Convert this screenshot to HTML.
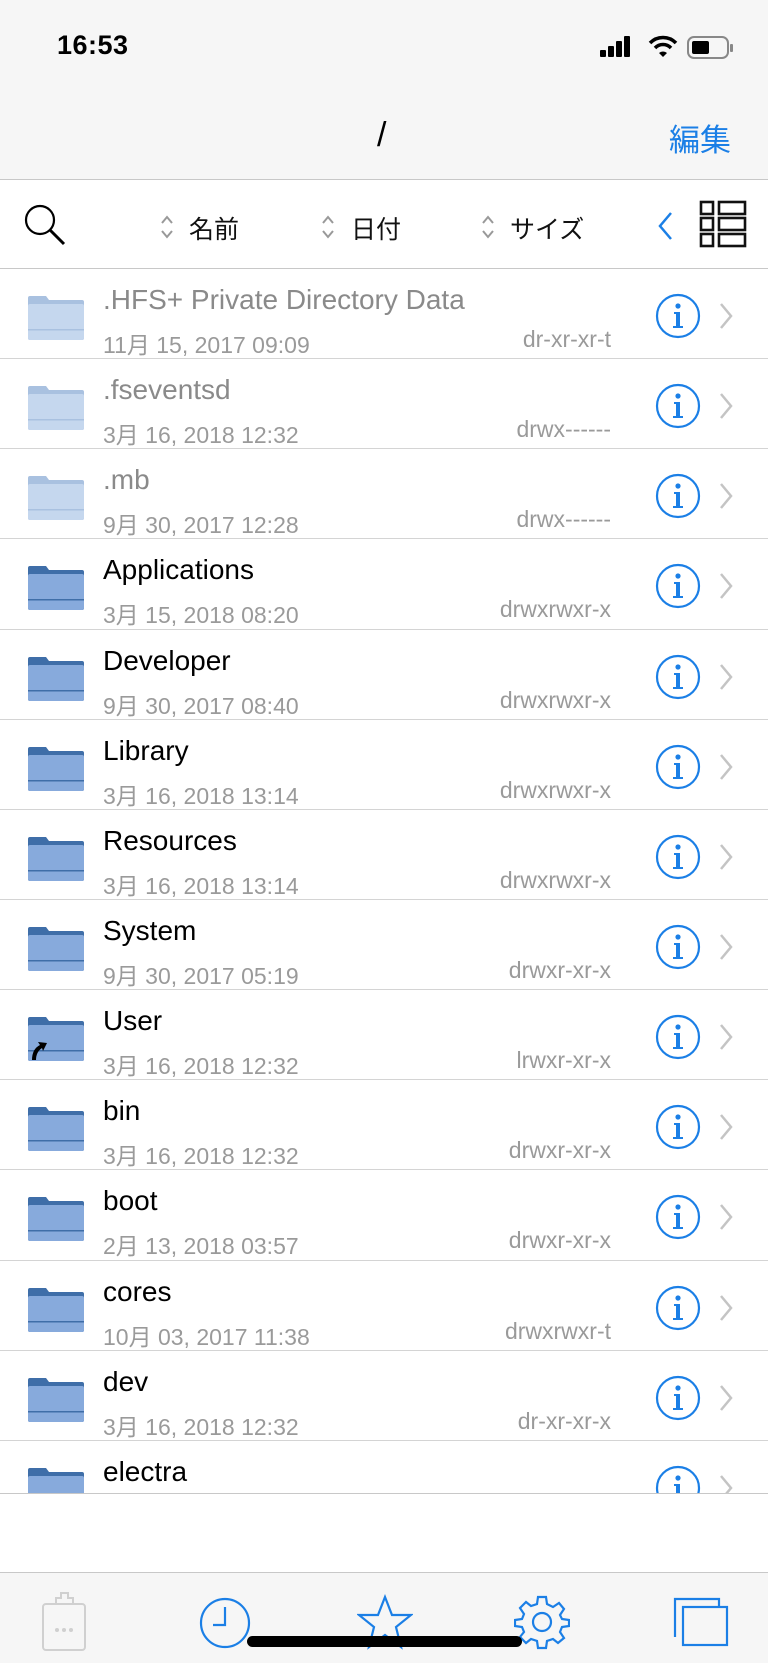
<!DOCTYPE html>
<html><head><meta charset="utf-8"><style>
*{margin:0;padding:0;box-sizing:border-box}
body{width:768px;height:1663px;position:relative;background:#fff;font-family:"Liberation Sans","Noto Sans CJK JP",sans-serif;overflow:hidden}
.abs{position:absolute}
.hdr{left:0;top:0;width:768px;height:180px;background:#f6f6f6;border-bottom:1px solid #c8c8c8}
.tb{left:0;top:180px;width:768px;height:89px;border-bottom:1px solid #c8c8c8;background:#fff}
.list{left:0;top:269px;width:768px;height:1225px;overflow:hidden;border-bottom:1px solid #c8c8c8}
.row{position:relative;height:90.15px;border-bottom:1px solid #d4d4d4}
.name{position:absolute;left:103px;top:15px;font-size:28px;color:#000;white-space:nowrap}
.date{position:absolute;left:103px;top:57px;font-size:23px;color:#9a9a9a;white-space:nowrap}
.perm{position:absolute;right:157px;top:57px;font-size:23px;color:#9a9a9a;white-space:nowrap}
.dim .name{color:#8a8a8a}
.ic{position:absolute;left:28px;top:25px}
.info{position:absolute;left:655px;top:24px}
.chev{position:absolute;left:718px;top:32px}
.tab{left:0;top:1572px;width:768px;height:91px;background:#f6f6f6;border-top:1px solid #c8c8c8}
.sort{font-size:25px;color:#111;top:210px}
</style></head><body>
<div class="abs hdr"></div>
<div class="abs" style="left:57px;top:30px;font-size:27px;font-weight:bold;letter-spacing:0.5px">16:53</div>
<svg class="abs" style="left:600px;top:36px" width="40" height="22"><rect x="0" y="14" width="6" height="7" rx="1"/><rect x="8" y="10" width="6" height="11" rx="1"/><rect x="16" y="5" width="6" height="16" rx="1"/><rect x="24" y="0" width="6" height="21" rx="1"/></svg>
<svg class="abs" style="left:648px;top:35px" width="30" height="24" viewBox="0 0 30 24"><path d="M2 8 A18 18 0 0 1 28 8" stroke="#000" stroke-width="3.5" fill="none"/><path d="M7 13 A11 11 0 0 1 23 13" stroke="#000" stroke-width="3.5" fill="none"/><path d="M11 18 L15 22 L19 18 A6 6 0 0 0 11 18Z"/></svg>
<svg class="abs" style="left:687px;top:36px" width="48" height="24"><rect x="1" y="1" width="40" height="21" rx="6" fill="none" stroke="#888" stroke-width="2"/><rect x="5" y="5" width="17" height="13" rx="2"/><rect x="43" y="8" width="3" height="8" rx="1" fill="#888"/></svg>
<div class="abs" style="left:377px;top:116px;font-size:34px">/</div>
<div class="abs" style="left:669px;top:115px;font-size:31px;color:#1b7fe6">編集</div>
<div class="abs tb"></div>
<svg class="abs" style="left:22px;top:202px" width="46" height="46"><circle cx="18" cy="18" r="14" fill="none" stroke="#000" stroke-width="2.2"/><path d="M28 28 L42 42" stroke="#000" stroke-width="3"/></svg>
<svg class="abs" style="left:160px;top:214px" width="14" height="26"><path d="M2 9 L7 3 L12 9 M2 17 L7 23 L12 17" stroke="#999" stroke-width="2" fill="none"/></svg>
<div class="abs sort" style="left:189px">名前</div>
<svg class="abs" style="left:321px;top:214px" width="14" height="26"><path d="M2 9 L7 3 L12 9 M2 17 L7 23 L12 17" stroke="#999" stroke-width="2" fill="none"/></svg>
<div class="abs sort" style="left:351px">日付</div>
<svg class="abs" style="left:481px;top:214px" width="14" height="26"><path d="M2 9 L7 3 L12 9 M2 17 L7 23 L12 17" stroke="#999" stroke-width="2" fill="none"/></svg>
<div class="abs sort" style="left:510px">サイズ</div>
<svg class="abs" style="left:656px;top:210px" width="20" height="32"><path d="M15 3 L4 16 L15 29" stroke="#1b7fe6" stroke-width="2.5" fill="none"/></svg>
<svg class="abs" style="left:699px;top:200px" width="48" height="49"><g fill="none" stroke="#111" stroke-width="2.6"><rect x="2" y="2" width="12" height="12"/><rect x="20" y="2" width="26" height="12"/><rect x="2" y="18" width="12" height="12"/><rect x="20" y="18" width="26" height="12"/><rect x="2" y="34" width="12" height="12"/><rect x="20" y="34" width="26" height="12"/></g></svg>

<div class="abs list">
<div class="row dim"><svg class="ic" width="56" height="46"><path d="M0 4 Q0 2 2 2 H18 L21 6 H54 Q56 6 56 8 V44 Q56 46 54 46 H2 Q0 46 0 44Z" fill="#a9c1e0"/><rect x="0" y="10" width="56" height="36" rx="2" fill="#c5d7ee"/><rect x="0" y="35" width="56" height="1.5" fill="#a9c1e0"/></svg><div class="name">.HFS+ Private Directory Data</div><div class="date">11月 15, 2017 09:09</div><div class="perm">dr-xr-xr-t</div><svg class="info" width="46" height="46"><circle cx="23" cy="23" r="21" fill="none" stroke="#1b7fe6" stroke-width="2.2"/><circle cx="23" cy="13" r="2.6" fill="#1b7fe6"/><path d="M19 19 H25 V33 H28 V35 H18 V33 H21 V21 H19Z" fill="#1b7fe6"/></svg><svg class="chev" width="16" height="30"><path d="M3 3 L13 15 L3 27" stroke="#c4c4c4" stroke-width="2.5" fill="none"/></svg></div>
<div class="row dim"><svg class="ic" width="56" height="46"><path d="M0 4 Q0 2 2 2 H18 L21 6 H54 Q56 6 56 8 V44 Q56 46 54 46 H2 Q0 46 0 44Z" fill="#a9c1e0"/><rect x="0" y="10" width="56" height="36" rx="2" fill="#c5d7ee"/><rect x="0" y="35" width="56" height="1.5" fill="#a9c1e0"/></svg><div class="name">.fseventsd</div><div class="date">3月 16, 2018 12:32</div><div class="perm">drwx------</div><svg class="info" width="46" height="46"><circle cx="23" cy="23" r="21" fill="none" stroke="#1b7fe6" stroke-width="2.2"/><circle cx="23" cy="13" r="2.6" fill="#1b7fe6"/><path d="M19 19 H25 V33 H28 V35 H18 V33 H21 V21 H19Z" fill="#1b7fe6"/></svg><svg class="chev" width="16" height="30"><path d="M3 3 L13 15 L3 27" stroke="#c4c4c4" stroke-width="2.5" fill="none"/></svg></div>
<div class="row dim"><svg class="ic" width="56" height="46"><path d="M0 4 Q0 2 2 2 H18 L21 6 H54 Q56 6 56 8 V44 Q56 46 54 46 H2 Q0 46 0 44Z" fill="#a9c1e0"/><rect x="0" y="10" width="56" height="36" rx="2" fill="#c5d7ee"/><rect x="0" y="35" width="56" height="1.5" fill="#a9c1e0"/></svg><div class="name">.mb</div><div class="date">9月 30, 2017 12:28</div><div class="perm">drwx------</div><svg class="info" width="46" height="46"><circle cx="23" cy="23" r="21" fill="none" stroke="#1b7fe6" stroke-width="2.2"/><circle cx="23" cy="13" r="2.6" fill="#1b7fe6"/><path d="M19 19 H25 V33 H28 V35 H18 V33 H21 V21 H19Z" fill="#1b7fe6"/></svg><svg class="chev" width="16" height="30"><path d="M3 3 L13 15 L3 27" stroke="#c4c4c4" stroke-width="2.5" fill="none"/></svg></div>
<div class="row"><svg class="ic" width="56" height="46"><path d="M0 4 Q0 2 2 2 H18 L21 6 H54 Q56 6 56 8 V44 Q56 46 54 46 H2 Q0 46 0 44Z" fill="#3f6ea8"/><rect x="0" y="10" width="56" height="36" rx="2" fill="#87aadc"/><rect x="0" y="35" width="56" height="1.5" fill="#3f6ea8"/></svg><div class="name">Applications</div><div class="date">3月 15, 2018 08:20</div><div class="perm">drwxrwxr-x</div><svg class="info" width="46" height="46"><circle cx="23" cy="23" r="21" fill="none" stroke="#1b7fe6" stroke-width="2.2"/><circle cx="23" cy="13" r="2.6" fill="#1b7fe6"/><path d="M19 19 H25 V33 H28 V35 H18 V33 H21 V21 H19Z" fill="#1b7fe6"/></svg><svg class="chev" width="16" height="30"><path d="M3 3 L13 15 L3 27" stroke="#c4c4c4" stroke-width="2.5" fill="none"/></svg></div>
<div class="row"><svg class="ic" width="56" height="46"><path d="M0 4 Q0 2 2 2 H18 L21 6 H54 Q56 6 56 8 V44 Q56 46 54 46 H2 Q0 46 0 44Z" fill="#3f6ea8"/><rect x="0" y="10" width="56" height="36" rx="2" fill="#87aadc"/><rect x="0" y="35" width="56" height="1.5" fill="#3f6ea8"/></svg><div class="name">Developer</div><div class="date">9月 30, 2017 08:40</div><div class="perm">drwxrwxr-x</div><svg class="info" width="46" height="46"><circle cx="23" cy="23" r="21" fill="none" stroke="#1b7fe6" stroke-width="2.2"/><circle cx="23" cy="13" r="2.6" fill="#1b7fe6"/><path d="M19 19 H25 V33 H28 V35 H18 V33 H21 V21 H19Z" fill="#1b7fe6"/></svg><svg class="chev" width="16" height="30"><path d="M3 3 L13 15 L3 27" stroke="#c4c4c4" stroke-width="2.5" fill="none"/></svg></div>
<div class="row"><svg class="ic" width="56" height="46"><path d="M0 4 Q0 2 2 2 H18 L21 6 H54 Q56 6 56 8 V44 Q56 46 54 46 H2 Q0 46 0 44Z" fill="#3f6ea8"/><rect x="0" y="10" width="56" height="36" rx="2" fill="#87aadc"/><rect x="0" y="35" width="56" height="1.5" fill="#3f6ea8"/></svg><div class="name">Library</div><div class="date">3月 16, 2018 13:14</div><div class="perm">drwxrwxr-x</div><svg class="info" width="46" height="46"><circle cx="23" cy="23" r="21" fill="none" stroke="#1b7fe6" stroke-width="2.2"/><circle cx="23" cy="13" r="2.6" fill="#1b7fe6"/><path d="M19 19 H25 V33 H28 V35 H18 V33 H21 V21 H19Z" fill="#1b7fe6"/></svg><svg class="chev" width="16" height="30"><path d="M3 3 L13 15 L3 27" stroke="#c4c4c4" stroke-width="2.5" fill="none"/></svg></div>
<div class="row"><svg class="ic" width="56" height="46"><path d="M0 4 Q0 2 2 2 H18 L21 6 H54 Q56 6 56 8 V44 Q56 46 54 46 H2 Q0 46 0 44Z" fill="#3f6ea8"/><rect x="0" y="10" width="56" height="36" rx="2" fill="#87aadc"/><rect x="0" y="35" width="56" height="1.5" fill="#3f6ea8"/></svg><div class="name">Resources</div><div class="date">3月 16, 2018 13:14</div><div class="perm">drwxrwxr-x</div><svg class="info" width="46" height="46"><circle cx="23" cy="23" r="21" fill="none" stroke="#1b7fe6" stroke-width="2.2"/><circle cx="23" cy="13" r="2.6" fill="#1b7fe6"/><path d="M19 19 H25 V33 H28 V35 H18 V33 H21 V21 H19Z" fill="#1b7fe6"/></svg><svg class="chev" width="16" height="30"><path d="M3 3 L13 15 L3 27" stroke="#c4c4c4" stroke-width="2.5" fill="none"/></svg></div>
<div class="row"><svg class="ic" width="56" height="46"><path d="M0 4 Q0 2 2 2 H18 L21 6 H54 Q56 6 56 8 V44 Q56 46 54 46 H2 Q0 46 0 44Z" fill="#3f6ea8"/><rect x="0" y="10" width="56" height="36" rx="2" fill="#87aadc"/><rect x="0" y="35" width="56" height="1.5" fill="#3f6ea8"/></svg><div class="name">System</div><div class="date">9月 30, 2017 05:19</div><div class="perm">drwxr-xr-x</div><svg class="info" width="46" height="46"><circle cx="23" cy="23" r="21" fill="none" stroke="#1b7fe6" stroke-width="2.2"/><circle cx="23" cy="13" r="2.6" fill="#1b7fe6"/><path d="M19 19 H25 V33 H28 V35 H18 V33 H21 V21 H19Z" fill="#1b7fe6"/></svg><svg class="chev" width="16" height="30"><path d="M3 3 L13 15 L3 27" stroke="#c4c4c4" stroke-width="2.5" fill="none"/></svg></div>
<div class="row"><svg class="ic" width="56" height="46"><path d="M0 4 Q0 2 2 2 H18 L21 6 H54 Q56 6 56 8 V44 Q56 46 54 46 H2 Q0 46 0 44Z" fill="#3f6ea8"/><rect x="0" y="10" width="56" height="36" rx="2" fill="#87aadc"/><rect x="0" y="35" width="56" height="1.5" fill="#3f6ea8"/><path d="M4 45 Q4 34 12 30 L10 27 L19 28 L15 36 L14 33 Q8 37 8 45Z" fill="#000"/></svg><div class="name">User</div><div class="date">3月 16, 2018 12:32</div><div class="perm">lrwxr-xr-x</div><svg class="info" width="46" height="46"><circle cx="23" cy="23" r="21" fill="none" stroke="#1b7fe6" stroke-width="2.2"/><circle cx="23" cy="13" r="2.6" fill="#1b7fe6"/><path d="M19 19 H25 V33 H28 V35 H18 V33 H21 V21 H19Z" fill="#1b7fe6"/></svg><svg class="chev" width="16" height="30"><path d="M3 3 L13 15 L3 27" stroke="#c4c4c4" stroke-width="2.5" fill="none"/></svg></div>
<div class="row"><svg class="ic" width="56" height="46"><path d="M0 4 Q0 2 2 2 H18 L21 6 H54 Q56 6 56 8 V44 Q56 46 54 46 H2 Q0 46 0 44Z" fill="#3f6ea8"/><rect x="0" y="10" width="56" height="36" rx="2" fill="#87aadc"/><rect x="0" y="35" width="56" height="1.5" fill="#3f6ea8"/></svg><div class="name">bin</div><div class="date">3月 16, 2018 12:32</div><div class="perm">drwxr-xr-x</div><svg class="info" width="46" height="46"><circle cx="23" cy="23" r="21" fill="none" stroke="#1b7fe6" stroke-width="2.2"/><circle cx="23" cy="13" r="2.6" fill="#1b7fe6"/><path d="M19 19 H25 V33 H28 V35 H18 V33 H21 V21 H19Z" fill="#1b7fe6"/></svg><svg class="chev" width="16" height="30"><path d="M3 3 L13 15 L3 27" stroke="#c4c4c4" stroke-width="2.5" fill="none"/></svg></div>
<div class="row"><svg class="ic" width="56" height="46"><path d="M0 4 Q0 2 2 2 H18 L21 6 H54 Q56 6 56 8 V44 Q56 46 54 46 H2 Q0 46 0 44Z" fill="#3f6ea8"/><rect x="0" y="10" width="56" height="36" rx="2" fill="#87aadc"/><rect x="0" y="35" width="56" height="1.5" fill="#3f6ea8"/></svg><div class="name">boot</div><div class="date">2月 13, 2018 03:57</div><div class="perm">drwxr-xr-x</div><svg class="info" width="46" height="46"><circle cx="23" cy="23" r="21" fill="none" stroke="#1b7fe6" stroke-width="2.2"/><circle cx="23" cy="13" r="2.6" fill="#1b7fe6"/><path d="M19 19 H25 V33 H28 V35 H18 V33 H21 V21 H19Z" fill="#1b7fe6"/></svg><svg class="chev" width="16" height="30"><path d="M3 3 L13 15 L3 27" stroke="#c4c4c4" stroke-width="2.5" fill="none"/></svg></div>
<div class="row"><svg class="ic" width="56" height="46"><path d="M0 4 Q0 2 2 2 H18 L21 6 H54 Q56 6 56 8 V44 Q56 46 54 46 H2 Q0 46 0 44Z" fill="#3f6ea8"/><rect x="0" y="10" width="56" height="36" rx="2" fill="#87aadc"/><rect x="0" y="35" width="56" height="1.5" fill="#3f6ea8"/></svg><div class="name">cores</div><div class="date">10月 03, 2017 11:38</div><div class="perm">drwxrwxr-t</div><svg class="info" width="46" height="46"><circle cx="23" cy="23" r="21" fill="none" stroke="#1b7fe6" stroke-width="2.2"/><circle cx="23" cy="13" r="2.6" fill="#1b7fe6"/><path d="M19 19 H25 V33 H28 V35 H18 V33 H21 V21 H19Z" fill="#1b7fe6"/></svg><svg class="chev" width="16" height="30"><path d="M3 3 L13 15 L3 27" stroke="#c4c4c4" stroke-width="2.5" fill="none"/></svg></div>
<div class="row"><svg class="ic" width="56" height="46"><path d="M0 4 Q0 2 2 2 H18 L21 6 H54 Q56 6 56 8 V44 Q56 46 54 46 H2 Q0 46 0 44Z" fill="#3f6ea8"/><rect x="0" y="10" width="56" height="36" rx="2" fill="#87aadc"/><rect x="0" y="35" width="56" height="1.5" fill="#3f6ea8"/></svg><div class="name">dev</div><div class="date">3月 16, 2018 12:32</div><div class="perm">dr-xr-xr-x</div><svg class="info" width="46" height="46"><circle cx="23" cy="23" r="21" fill="none" stroke="#1b7fe6" stroke-width="2.2"/><circle cx="23" cy="13" r="2.6" fill="#1b7fe6"/><path d="M19 19 H25 V33 H28 V35 H18 V33 H21 V21 H19Z" fill="#1b7fe6"/></svg><svg class="chev" width="16" height="30"><path d="M3 3 L13 15 L3 27" stroke="#c4c4c4" stroke-width="2.5" fill="none"/></svg></div>
<div class="row" style="border:none"><svg class="ic" width="56" height="46"><path d="M0 4 Q0 2 2 2 H18 L21 6 H54 Q56 6 56 8 V44 Q56 46 54 46 H2 Q0 46 0 44Z" fill="#3f6ea8"/><rect x="0" y="10" width="56" height="36" rx="2" fill="#87aadc"/><rect x="0" y="35" width="56" height="1.5" fill="#3f6ea8"/></svg><div class="name">electra</div><svg class="info" width="46" height="46"><circle cx="23" cy="23" r="21" fill="none" stroke="#1b7fe6" stroke-width="2.2"/><circle cx="23" cy="13" r="2.6" fill="#1b7fe6"/><path d="M19 19 H25 V33 H28 V35 H18 V33 H21 V21 H19Z" fill="#1b7fe6"/></svg><svg class="chev" width="16" height="30"><path d="M3 3 L13 15 L3 27" stroke="#c4c4c4" stroke-width="2.5" fill="none"/></svg></div>
</div>

<div class="abs tab"></div>
<svg class="abs" style="left:40px;top:1592px" width="50" height="60"><g fill="none" stroke="#d0d0d0" stroke-width="2"><rect x="3" y="12" width="42" height="46" rx="3"/><path d="M16 12 V6 H21 V1 H28 V6 H33 V12"/></g><g fill="#d0d0d0"><circle cx="17" cy="38" r="2"/><circle cx="24" cy="38" r="2"/><circle cx="31" cy="38" r="2"/></g></svg>
<svg class="abs" style="left:199px;top:1597px" width="52" height="52"><circle cx="26" cy="26" r="24" fill="none" stroke="#1b7fe6" stroke-width="2.2"/><path d="M26 10 V28 H14" fill="none" stroke="#1b7fe6" stroke-width="2.2"/></svg>
<svg class="abs" style="left:357px;top:1594px" width="56" height="56"><path d="M28 3 L35 21 L54 21 L39 33 L44 53 L28 41 L12 53 L17 33 L2 21 L21 21Z" fill="none" stroke="#1b7fe6" stroke-width="2.2"/></svg>
<svg class="abs" style="left:514px;top:1594px" width="56" height="56" viewBox="0 0 56 56"><g fill="none" stroke="#1b7fe6" stroke-width="2.2"><circle cx="28" cy="28" r="9"/><path d="M24 3 H32 L33 10 L39 13 L45 9 L50 15 L46 21 L48 25 L55 26 V32 L48 33 L46 38 L50 44 L44 49 L39 45 L33 47 L32 54 H24 L23 47 L17 45 L12 49 L6 43 L10 38 L8 33 L1 32 V26 L8 25 L10 20 L6 14 L12 8 L17 12 L23 10Z"/></g></svg>
<svg class="abs" style="left:673px;top:1597px" width="56" height="50"><g fill="none" stroke="#1b7fe6" stroke-width="2.2"><path d="M2 40 V2 H46 V10"/><rect x="10" y="10" width="44" height="38"/></g></svg>
<div class="abs" style="left:247px;top:1636px;width:275px;height:11px;border-radius:6px;background:#000"></div>
</body></html>
